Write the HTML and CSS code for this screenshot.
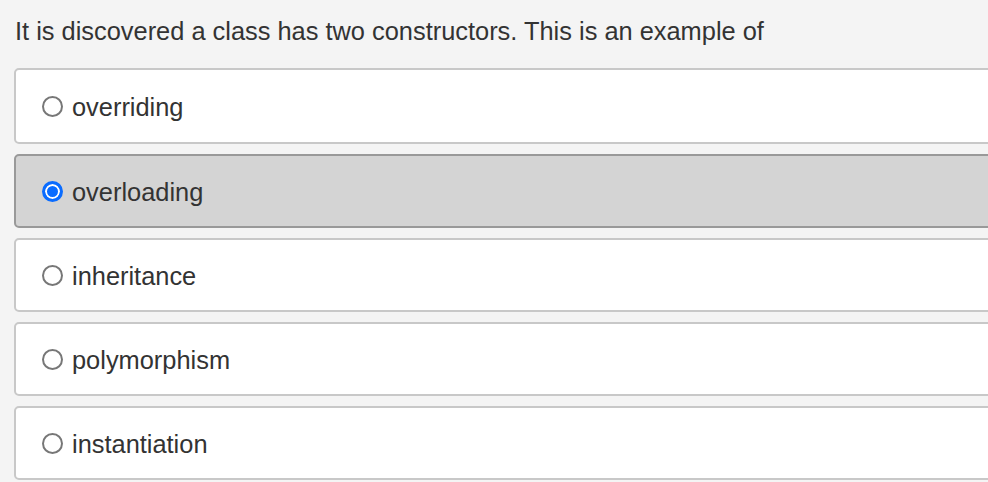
FILE: index.html
```html
<!DOCTYPE html>
<html lang="en">
<head>
    <meta charset="UTF-8">
    <meta name="viewport" content="width=device-width, initial-scale=1.0">
    <title>Quiz</title>
    <link rel="stylesheet" href="styles.css">
</head>
<body>
    <div class="quiz">
        <p class="question">It is discovered a class has two constructors. This is an example of</p>
        <div class="options">
            <label class="option">
                <input type="radio" name="answer" value="overriding">
                <span>overriding</span>
            </label>
            <label class="option selected">
                <input type="radio" name="answer" value="overloading" checked>
                <span>overloading</span>
            </label>
            <label class="option">
                <input type="radio" name="answer" value="inheritance">
                <span>inheritance</span>
            </label>
            <label class="option">
                <input type="radio" name="answer" value="polymorphism">
                <span>polymorphism</span>
            </label>
            <label class="option">
                <input type="radio" name="answer" value="instantiation">
                <span>instantiation</span>
            </label>
        </div>
    </div>
</body>
</html>
```

FILE: styles.css
```css
* {
    margin: 0;
    padding: 0;
    box-sizing: border-box;
}
body {
    background-color: #f4f4f4;
    font-family: "Liberation Sans", Arial, sans-serif;
    color: #333;
    overflow: hidden;
}
.quiz {
    padding: 13px 0 0 14px;
}
.question {
    font-size: 25.4px;
    line-height: 36px;
    padding-left: 1px;
    margin-bottom: 19px;
}
.options {
    display: flex;
    flex-direction: column;
    gap: 10px;
    margin-right: -30px;
}
.option {
    display: flex;
    align-items: center;
    height: 74px;
    padding-left: 26px;
    background-color: #fff;
    border: 2px solid #c8c8c8;
    border-radius: 5px;
    font-size: 25.4px;
    cursor: pointer;
}
.option:first-child {
    height: 76px;
}
.option.selected {
    background-color: #d4d4d4;
    border-color: #999;
}
.option span {
    padding-top: 2px;
}
.option input {
    appearance: none;
    -webkit-appearance: none;
    width: 21px;
    height: 21px;
    margin-right: 9px;
    border: 2px solid #777;
    border-radius: 50%;
    background-color: #fff;
    flex-shrink: 0;
}
.option input:checked {
    border: 3px solid #0a6cff;
    background-color: #0a6cff;
    box-shadow: inset 0 0 0 2px #fff;
}
```
